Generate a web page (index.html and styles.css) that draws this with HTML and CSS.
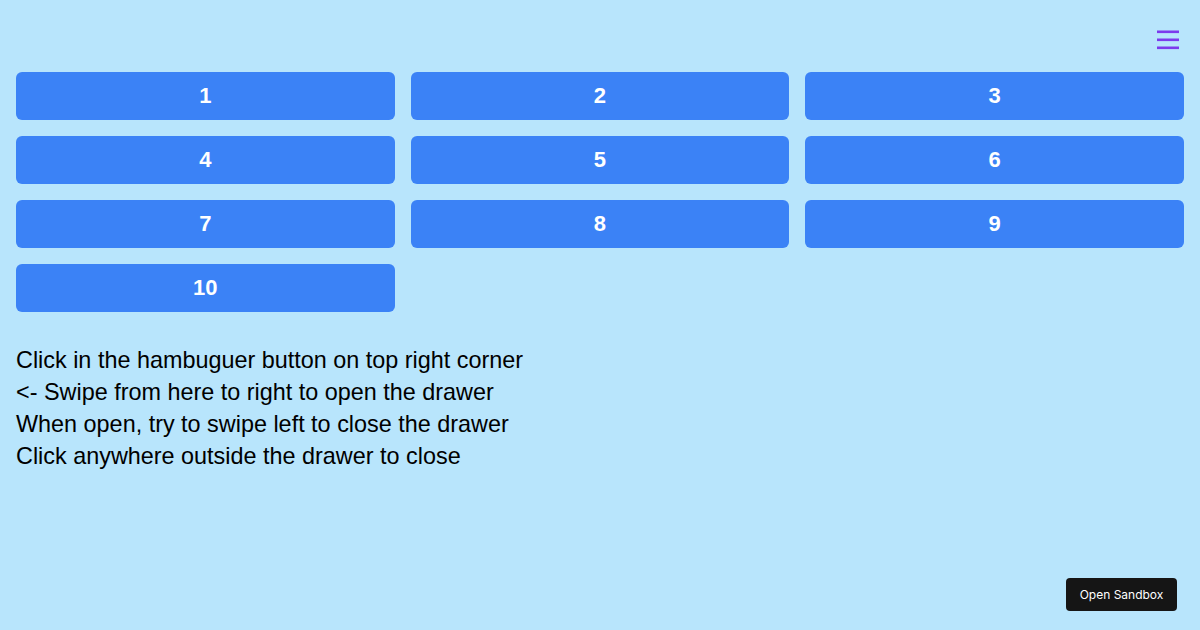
FILE: index.html
```html
<!DOCTYPE html>
<html lang="en">
<head>
    <meta charset="UTF-8">
    <meta name="viewport" content="width=device-width, initial-scale=1.0">
    <title>Drawer</title>
    <link rel="stylesheet" href="styles.css">
</head>
<body>
    <header class="topbar">
        <button class="menu-btn" aria-label="Open menu">
            <svg width="32" height="32" viewBox="0 0 32 32">
                <rect x="5" y="10.5" width="22" height="2.6" fill="#7c3aed"/>
                <rect x="5" y="18.5" width="22" height="2.6" fill="#7c3aed"/>
                <rect x="5" y="26.5" width="22" height="2.6" fill="#7c3aed"/>
            </svg>
        </button>
    </header>

    <div class="grid">
        <button class="item">1</button>
        <button class="item">2</button>
        <button class="item">3</button>
        <button class="item">4</button>
        <button class="item">5</button>
        <button class="item">6</button>
        <button class="item">7</button>
        <button class="item">8</button>
        <button class="item">9</button>
        <button class="item">10</button>
    </div>

    <div class="help">
        <p>Click in the hambuguer button on top right corner</p>
        <p>&lt;- Swipe from here to right to open the drawer</p>
        <p>When open, try to swipe left to close the drawer</p>
        <p>Click anywhere outside the drawer to close</p>
    </div>

    <a class="sandbox-btn" href="#">Open Sandbox</a>
</body>
</html>
```

FILE: styles.css
```css
body {
    font-family: "Liberation Sans", Arial, sans-serif;
    background-color: #b8e5fc;
    margin: 0;
    padding: 16px;
    height: 630px;
    box-sizing: border-box;
}
.topbar {
    display: flex;
    justify-content: flex-end;
    align-items: center;
    height: 40px;
    margin-bottom: 16px;
}
.menu-btn {
    background: none;
    border: none;
    padding: 0;
    width: 32px;
    height: 32px;
    cursor: pointer;
}
.menu-btn svg {
    display: block;
}
.grid {
    display: grid;
    grid-template-columns: repeat(3, 1fr);
    gap: 16px;
}
.item {
    height: 48px;
    background-color: #3b82f6;
    color: white;
    border: none;
    border-radius: 6px;
    font-family: "Liberation Sans", Arial, sans-serif;
    font-size: 22px;
    font-weight: bold;
    cursor: pointer;
}
.help {
    margin-top: 32px;
    font-size: 23.4px;
    line-height: 32px;
    color: #000;
}
.help p {
    margin: 0;
}
.sandbox-btn {
    position: fixed;
    right: 23px;
    bottom: 19px;
    width: 111px;
    height: 33px;
    display: flex;
    align-items: center;
    justify-content: center;
    background-color: #151515;
    color: #fff;
    border-radius: 4px;
    font-family: Inter, sans-serif;
    font-size: 12px;
    text-decoration: none;
}
```
